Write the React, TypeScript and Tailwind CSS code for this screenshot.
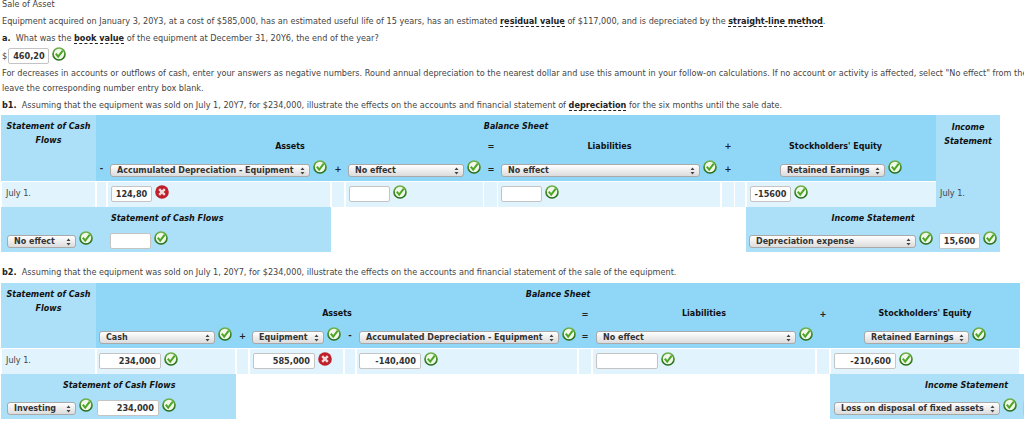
import React from "react";

function Check() {
  return (
    <svg width="14" height="14" viewBox="0 0 14 14" className="shrink-0">
      <defs>
        <linearGradient id="cg" x1="0" y1="0" x2="0" y2="1">
          <stop offset="0" stopColor="#6fb24a" />
          <stop offset="1" stopColor="#1f6b12" />
        </linearGradient>
      </defs>
      <circle cx="7" cy="7" r="6" fill="#f1f8ea" stroke="url(#cg)" strokeWidth="1.7" />
      <path d="M3.8 6.6 L6.2 9.6 L10.8 3.6" fill="none" stroke="#4da626" strokeWidth="2" />
    </svg>
  );
}

function Cross() {
  return (
    <svg width="14" height="14" viewBox="0 0 14 14" className="shrink-0">
      <circle cx="7" cy="7" r="6.8" fill="#bf1f2a" />
      <path d="M4.2 4.2 L9.8 9.8 M9.8 4.2 L4.2 9.8" fill="none" stroke="#f3dcdc" strokeWidth="2.4" />
    </svg>
  );
}

function Sel({ w, children }: { w: string; children: React.ReactNode }) {
  return (
    <div className={`${w} h-[13px] shrink-0 flex items-center justify-between pl-[6px] pr-[4px] rounded-[3px] border border-[#a9a9a9] bg-gradient-to-b from-white to-[#dcdcdc] text-[8px] font-bold text-[#333] whitespace-nowrap overflow-hidden`}>
      <span>{children}</span>
      <svg width="5" height="8" viewBox="0 0 5 8" className="shrink-0">
        <path d="M2.5 0.5 L4.5 3 L0.5 3 Z M2.5 7.5 L4.5 5 L0.5 5 Z" fill="#444" />
      </svg>
    </div>
  );
}

function Inp({ w, align, children }: { w: string; align?: string; children?: React.ReactNode }) {
  return (
    <div className={`${w} h-[16px] shrink-0 flex items-center px-[4px] ${align ?? "justify-start"} rounded-[2px] border border-[#c4c4c4] bg-white text-[8.2px] font-bold text-[#333] whitespace-nowrap`}>
      {children}
    </div>
  );
}

function Term({ children }: { children: React.ReactNode }) {
  return <span className="font-bold text-[#222] border-b border-dashed border-[#222]">{children}</span>;
}

function Line({ className, children }: { className?: string; children: React.ReactNode }) {
  return <div className={`whitespace-nowrap flex-none leading-[16px] ${className ?? ""}`}><span>{children}</span></div>;
}

const sign = "text-center font-bold text-[#222] text-[8.4px]";
const hdr = "text-center font-bold text-[#111] text-[8px]";
const ital = "font-bold italic text-[#111] text-[8px]";
const pale = "bg-[#e1f3fc] ml-px mr-px mt-px";

function Pair({ children, className }: { children: React.ReactNode; className?: string }) {
  return <div className={`flex items-start gap-[3px] ${className ?? ""}`}>{children}</div>;
}

export default function App() {
  return (
    <div className="w-[1024px] h-[430px] overflow-hidden bg-white text-[#444] text-[8.13px] font-['DejaVu_Sans',Verdana,sans-serif]">
      <div className="pl-[2px] h-[119px] flex flex-col -mt-[4px]">
        <Line>Sale of Asset</Line>
        <Line className="mt-px">
          Equipment acquired on January 3, 20Y3, at a cost of $585,000, has an estimated useful life of 15 years, has an estimated <Term>residual value</Term> of $117,000, and is depreciated by the <Term>straight-line method</Term>.
        </Line>
        <Line className="mt-px"><b className="text-[#222]">a.</b>&nbsp; What was the <Term>book value</Term> of the equipment at December 31, 20Y6, the end of the year?</Line>
        <div className="flex items-start mt-[2px] h-[16px]">
          <span className="leading-[16px] mr-px">$</span>
          <Inp w="w-[41px]">460,20</Inp>
          <span className="ml-[3px] -mt-[1px]"><Check /></span>
        </div>
        <Line className="mt-px">
          For decreases in accounts or outflows of cash, enter your answers as negative numbers. Round annual depreciation to the nearest dollar and use this amount in your follow-on calculations. If no account or activity is affected, select "No effect" from the
        </Line>
        <Line className="-mt-px">leave the corresponding number entry box blank.</Line>
        <Line className="mt-px"><b className="text-[#222]">b1.</b>&nbsp; Assuming that the equipment was sold on July 1, 20Y7, for $234,000, illustrate the effects on the accounts and financial statement of <Term>depreciation</Term> for the six months until the sale date.</Line>
      </div>

      {/* Table 1 */}
      <div className="ml-px grid grid-cols-[95px_11px_224px_14px_139px_14px_223px_14px_11px_190px_64px] grid-rows-[66px_26px_45px]">
        <div className={`bg-[#acdff8] text-center pt-[5px] leading-[13.5px] ${ital}`}>Statement of Cash<br />Flows</div>
        <div className="col-[2/11] grid grid-cols-subgrid grid-rows-[21px_21px_24px] bg-[#90d7f7]">
          <div className={`col-span-full text-center pt-[6px] leading-[12px] ${ital}`}>Balance Sheet</div>
          <div className={`col-span-4 self-center ${hdr}`}>Assets</div>
          <div className={`self-center ${sign}`}>=</div>
          <div className={`self-center ${hdr}`}>Liabilities</div>
          <div className={`self-center ${sign}`}>+</div>
          <div className={`col-span-2 self-center ${hdr}`}>Stockholders' Equity</div>
          <div className={`mt-[5px] ${sign}`}>-</div>
          <Pair className="pl-[3px] pt-[3px]"><div className="mt-[4px]"><Sel w="w-[200px]">Accumulated Depreciation - Equipment</Sel></div><Check /></Pair>
          <div className={`mt-[6px] ${sign}`}>+</div>
          <Pair className="pl-[3px] pt-[3px]"><div className="mt-[4px]"><Sel w="w-[116px]">No effect</Sel></div><Check /></Pair>
          <div className={`mt-[6px] ${sign}`}>=</div>
          <Pair className="pl-[3px] pt-[3px]"><div className="mt-[4px]"><Sel w="w-[199px]">No effect</Sel></div><Check /></Pair>
          <div className={`mt-[6px] ${sign}`}>+</div>
          <div />
          <Pair className="justify-center pt-[3px]"><div className="mt-[4px]"><Sel w="w-[105px]">Retained Earnings</Sel></div><Check /></Pair>
        </div>
        <div className={`bg-[#acdff8] text-center pt-[6px] leading-[13.5px] ${ital}`}>Income<br />Statement</div>

        <div className={`ml-[3px] pl-[4px] pt-[5px] ${pale}`}>July 1.</div>
        <div className={pale} />
        <Pair className={`pl-[3px] pt-[3px] ${pale}`}><div className="mt-px"><Inp w="w-[41px]" align="justify-center">124,80</Inp></div><Cross /></Pair>
        <div className={pale} />
        <Pair className={`pl-[3px] pt-[3px] ${pale}`}><div className="mt-px"><Inp w="w-[41px]" /></div><Check /></Pair>
        <div className="bg-[#e1f3fc] mt-px mr-px" />
        <Pair className="bg-[#e1f3fc] mt-px mr-px pl-[3px] pt-[3px]"><div className="mt-px"><Inp w="w-[41px]" /></div><Check /></Pair>
        <div className={pale} />
        <div className="bg-[#e1f3fc] mt-px mr-px" />
        <Pair className="bg-[#e1f3fc] mt-px ml-px pl-[3px] pt-[3px]"><div className="mt-px"><Inp w="w-[41px]" align="justify-center">-15600</Inp></div><Check /></Pair>
        <div className="bg-[#acdff8] pl-[4px] pt-[6px]">July 1.</div>

        <div className="col-[1/4] bg-[#acdff8] flex flex-col">
          <div className={`pl-[110px] pt-[6px] leading-[12px] ${ital}`}>Statement of Cash Flows</div>
          <div className="flex items-start mt-[6px] pl-[6px]">
            <Pair><div className="mt-[4px]"><Sel w="w-[69px]">No effect</Sel></div><Check /></Pair>
            <Pair className="ml-[17px]"><div className="mt-[2px]"><Inp w="w-[41px]" /></div><Check /></Pair>
          </div>
        </div>
        <div className="col-[4/10]" />
        <div className="col-[10/12] bg-[#acdff8] flex flex-col">
          <div className={`text-center pt-[6px] leading-[12px] ${ital}`}>Income Statement</div>
          <div className="flex items-start mt-[6px] pl-[3px]">
            <Pair><div className="mt-[4px]"><Sel w="w-[167px]">Depreciation expense</Sel></div><Check /></Pair>
            <Pair className="ml-[6px]"><div className="mt-[2px]"><Inp w="w-[41px]" align="justify-center">15,600</Inp></div><Check /></Pair>
          </div>
        </div>
      </div>

      <div className="h-[31px] pl-[2px] pt-[12px]">
        <Line><b className="text-[#222]">b2.</b>&nbsp; Assuming that the equipment was sold on July 1, 20Y7, for $234,000, illustrate the effects on the accounts and financial statement of the sale of the equipment.</Line>
      </div>

      {/* Table 2 */}
      <div className="ml-px grid grid-cols-[95px_140px_13px_95px_12px_222px_14px_224px_14px_190px_10px] grid-rows-[65px_26px_45px]">
        <div className={`bg-[#acdff8] text-center pt-[5px] leading-[13.5px] ${ital}`}>Statement of Cash<br />Flows</div>
        <div className="col-[2/11] grid grid-cols-subgrid grid-rows-[21px_20px_24px] bg-[#90d7f7]">
          <div className={`col-span-full text-center pt-[6px] leading-[12px] ${ital}`}>Balance Sheet</div>
          <div className={`col-span-5 self-center ${hdr}`}>Assets</div>
          <div className={`self-center ${sign}`}>=</div>
          <div className={`self-center ${hdr}`}>Liabilities</div>
          <div className={`self-center ${sign}`}>+</div>
          <div className={`self-center ${hdr}`}>Stockholders' Equity</div>
          <Pair className="pl-[3px] pt-[3px]"><div className="mt-[4px]"><Sel w="w-[116px]">Cash</Sel></div><Check /></Pair>
          <div className={`mt-[6px] ${sign}`}>+</div>
          <Pair className="pl-[3px] pt-[3px]"><div className="mt-[4px]"><Sel w="w-[72px]">Equipment</Sel></div><Check /></Pair>
          <div className={`mt-[5px] ${sign}`}>-</div>
          <Pair className="pl-[3px] pt-[3px]"><div className="mt-[4px]"><Sel w="w-[200px]">Accumulated Depreciation - Equipment</Sel></div><Check /></Pair>
          <div className={`mt-[6px] ${sign}`}>=</div>
          <Pair className="pl-[4px] pt-[3px]"><div className="mt-[4px]"><Sel w="w-[200px]">No effect</Sel></div><Check /></Pair>
          <div />
          <Pair className="justify-center pt-[3px]"><div className="mt-[4px]"><Sel w="w-[105px]">Retained Earnings</Sel></div><Check /></Pair>
        </div>
        <div />

        <div className={`ml-[3px] pl-[4px] pt-[5px] ${pale}`}>July 1.</div>
        <Pair className={`pl-[2px] pt-[3px] ${pale}`}><div className="mt-px"><Inp w="w-[62px]" align="justify-end">234,000</Inp></div><Check /></Pair>
        <div className={pale} />
        <Pair className={`pl-[3px] pt-[3px] ${pale}`}><div className="mt-px"><Inp w="w-[62px]" align="justify-end">585,000</Inp></div><Cross /></Pair>
        <div className={pale} />
        <Pair className={`pl-[2px] pt-[3px] ${pale}`}><div className="mt-px"><Inp w="w-[62px]" align="justify-end">-140,400</Inp></div><Check /></Pair>
        <div className={pale} />
        <Pair className={`pl-[3px] pt-[3px] ${pale}`}><div className="mt-px"><Inp w="w-[62px]" /></div><Check /></Pair>
        <div className={pale} />
        <Pair className={`pl-[3px] pt-[3px] ${pale}`}><div className="mt-px"><Inp w="w-[62px]" align="justify-end">-210,600</Inp></div><Check /></Pair>
        <div />

        <div className="col-[1/3] bg-[#acdff8] flex flex-col">
          <div className={`pl-[62px] pt-[6px] leading-[12px] ${ital}`}>Statement of Cash Flows</div>
          <div className="flex items-start mt-[6px] pl-[6px]">
            <Pair><div className="mt-[4px]"><Sel w="w-[69px]">Investing</Sel></div><Check /></Pair>
            <Pair className="ml-[4px]"><div className="mt-[2px]"><Inp w="w-[62px]" align="justify-end">234,000</Inp></div><Check /></Pair>
          </div>
        </div>
        <div className="col-[3/10]" />
        <div className="col-[10/12] bg-[#acdff8] flex flex-col overflow-hidden">
          <div className={`pl-[95px] pt-[6px] leading-[12px] ${ital} whitespace-nowrap`}>Income Statement</div>
          <div className="flex items-start mt-[6px] pl-[4px]">
            <Pair><div className="mt-[4px]"><Sel w="w-[166px]">Loss on disposal of fixed assets</Sel></div><Check /></Pair>
            <div className="ml-[6px] mt-[2px]"><Inp w="w-[41px]" /></div>
          </div>
        </div>
      </div>
    </div>
  );
}
